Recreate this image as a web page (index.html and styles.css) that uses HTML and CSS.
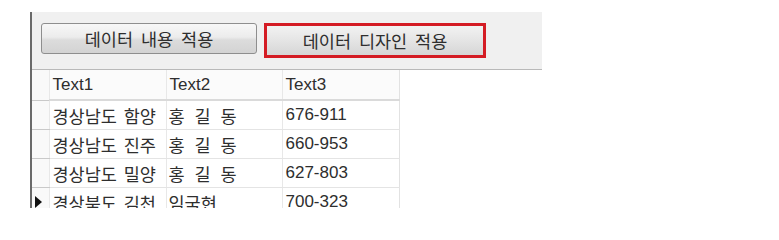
FILE: index.html
```html
<!DOCTYPE html>
<html lang="ko">
<head>
<meta charset="utf-8">
<link rel="stylesheet" href="styles.css">
</head>
<body>
<div class="frame">
  <div class="toolbar">
    <button class="btn">데이터 내용 적용</button>
    <div class="highlight"><button class="btn btn-inner">데이터 디자인 적용</button></div>
  </div>
  <div class="gridarea">
    <table class="grid">
      <colgroup>
        <col class="c-rh"><col class="c-1"><col class="c-2"><col class="c-3">
      </colgroup>
      <thead>
        <tr><th class="rh"></th><th>Text1</th><th>Text2</th><th>Text3</th></tr>
      </thead>
      <tbody>
        <tr><td class="rh"></td><td class="ko">경상남도 함양</td><td class="ko name">홍 길 동</td><td>676-911</td></tr>
        <tr><td class="rh"></td><td class="ko">경상남도 진주</td><td class="ko name">홍 길 동</td><td>660-953</td></tr>
        <tr><td class="rh"></td><td class="ko">경상남도 밀양</td><td class="ko name">홍 길 동</td><td>627-803</td></tr>
        <tr><td class="rh"><span class="arrow"></span></td><td class="ko">경상북도 김천</td><td class="ko name">임국현</td><td>700-323</td></tr>
      </tbody>
    </table>
  </div>
</div>
</body>
</html>
```

FILE: styles.css
```css
html, body {
  margin: 0;
  padding: 0;
  background: #ffffff;
}

.frame {
  margin: 12px 0 0 30px;
  width: 512px;
  height: 196px;
  overflow: hidden;
  border-left: 2px solid #6a6a6a;
  box-sizing: border-box;
  font-family: "Liberation Sans", "Noto Sans CJK KR", sans-serif;
  color: #2e2e2e;
}

.toolbar {
  height: 58px;
  box-sizing: border-box;
  background: #f0f0f0;
  border-bottom: 1px solid #b9b9b9;
  display: flex;
  align-items: flex-start;
  gap: 7px;
  padding: 11px 0 0 9px;
}

.btn {
  width: 216px;
  height: 31px;
  margin: 0;
  padding: 0;
  border: 1px solid #8e8e8e;
  border-radius: 3px;
  background: linear-gradient(#f7f7f7 0%, #ececec 45%, #dcdcdc 55%, #d3d3d3 100%);
  font-family: "Noto Sans CJK KR", sans-serif;
  font-size: 17.5px;
  word-spacing: 3px;
  color: #2e2e2e;
  line-height: 1;
}

.highlight {
  border: 3px solid #d41c24;
  width: 222px;
  height: 35px;
  box-sizing: border-box;
}

.btn-inner {
  width: 216px;
  height: 29px;
  border: none;
  border-radius: 0;
  background: linear-gradient(#f2f2f2 0%, #e6e6e6 45%, #d6d6d6 100%);
}

.gridarea {
  background: #ffffff;
}

.grid {
  border-collapse: collapse;
  table-layout: fixed;
  width: 367px;
  font-size: 17px;
  border-right: 1px solid #e2e2e2;
}

.c-rh { width: 17px; }
.c-1 { width: 117px; }
.c-2 { width: 116px; }
.c-3 { width: 117px; }

.grid th,
.grid td {
  text-align: left;
  font-weight: normal;
  padding: 0 0 0 3px;
  white-space: nowrap;
  overflow: hidden;
  border-left: 1px solid #e8e8e8;
  border-bottom: 1px solid #e4e4e4;
  color: #2e2e2e;
}

.grid th {
  height: 29px;
  border-bottom: 2px solid #dadada;
  background: #fbfbfb;
}

.grid td {
  height: 28px;
}

.grid td.ko {
  font-size: 17.5px;
  word-spacing: 2px;
}

.grid td.name {
  padding-left: 2px;
  word-spacing: 5px;
}

.grid .rh {
  padding: 0;
  border-left: none;
  border-bottom: 1px solid #c9c9c9;
  background: #f9f9f9;
}

.arrow {
  display: block;
  width: 0;
  height: 0;
  margin-left: 3px;
  border-top: 6px solid transparent;
  border-bottom: 6px solid transparent;
  border-left: 7px solid #111111;
}
```
